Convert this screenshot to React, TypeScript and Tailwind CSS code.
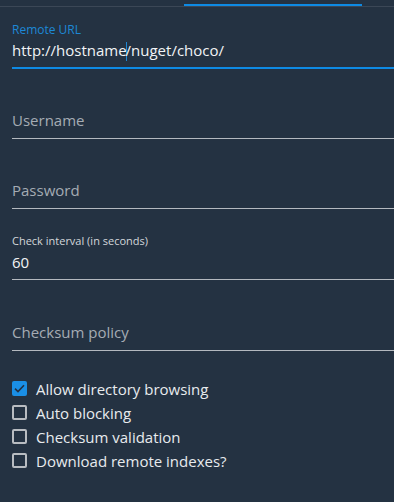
import React from 'react';

const font = { fontFamily: '"Open Sans", "Noto Sans", sans-serif' };

const checks = [
  { label: 'Allow directory browsing', checked: true },
  { label: 'Auto blocking', checked: false },
  { label: 'Checksum validation', checked: false },
  { label: 'Download remote indexes?', checked: false },
];

function PlaceholderField({ text }: { text: string }) {
  return (
    <div className="pt-10 pb-[7px] border-b border-[#b4b9bf]">
      <div className="text-[15px] leading-[22px] text-[#a5acb4]">{text}</div>
    </div>
  );
}

export default function App() {
  return (
    <div className="w-[394px] h-[502px] bg-[#243242] overflow-hidden" style={font}>
      {/* tab strip, mostly cut off */}
      <div className="flex h-[7px] border-b border-[#3b4756]">
        <div className="w-[184px]" />
        <div className="w-[178px] border-b-2 border-[#0e8ae4]" />
      </div>

      <div className="pl-3">
        {/* Remote URL, focused */}
        <div className="pt-[15px] pb-[6px] border-b-2 border-[#0e8ae4]">
          <div className="text-[12px] leading-4 text-[#1d88d6]">Remote URL</div>
          <div className="mt-px text-[15px] leading-[22px] text-[#f2f4f6] whitespace-nowrap">
            http://hostname
            <span className="inline-block w-px h-[19px] bg-[#1d88d6] align-middle -mx-px" />
            /nuget/choco/
          </div>
        </div>

        <PlaceholderField text="Username" />
        <PlaceholderField text="Password" />

        {/* Check interval */}
        <div className="pt-[25px] pb-[6px] border-b border-[#b4b9bf]">
          <div className="text-[11px] leading-[14px] text-[#d3d7db]">Check interval (in seconds)</div>
          <div className="mt-[3px] text-[15px] leading-[22px] text-[#f2f4f6]">60</div>
        </div>

        <div className="pt-[41px] pb-[7px] border-b border-[#b4b9bf]">
          <div className="text-[15px] leading-[22px] text-[#a5acb4]">Checksum policy</div>
        </div>

        {/* checkboxes */}
        <div className="mt-[25px] flex flex-col">
          {checks.map((c) => (
            <div key={c.label} className="flex items-center h-6 gap-[9px]">
              {c.checked ? (
                <div className="w-[15px] h-[15px] rounded-[2px] bg-[#1a8fe6] flex items-center justify-center">
                  <svg width="11" height="9" viewBox="0 0 11 9" fill="none">
                    <path d="M1 4.6 L4 7.6 L10 1.2" stroke="#233042" strokeWidth="1.6" />
                  </svg>
                </div>
              ) : (
                <div className="w-[15px] h-[15px] rounded-[2px] border-2 border-[#b8bcc1]" />
              )}
              <span className="text-[15px] leading-6 text-[#e8ebee] pt-[2px]">{c.label}</span>
            </div>
          ))}
        </div>
      </div>
    </div>
  );
}
